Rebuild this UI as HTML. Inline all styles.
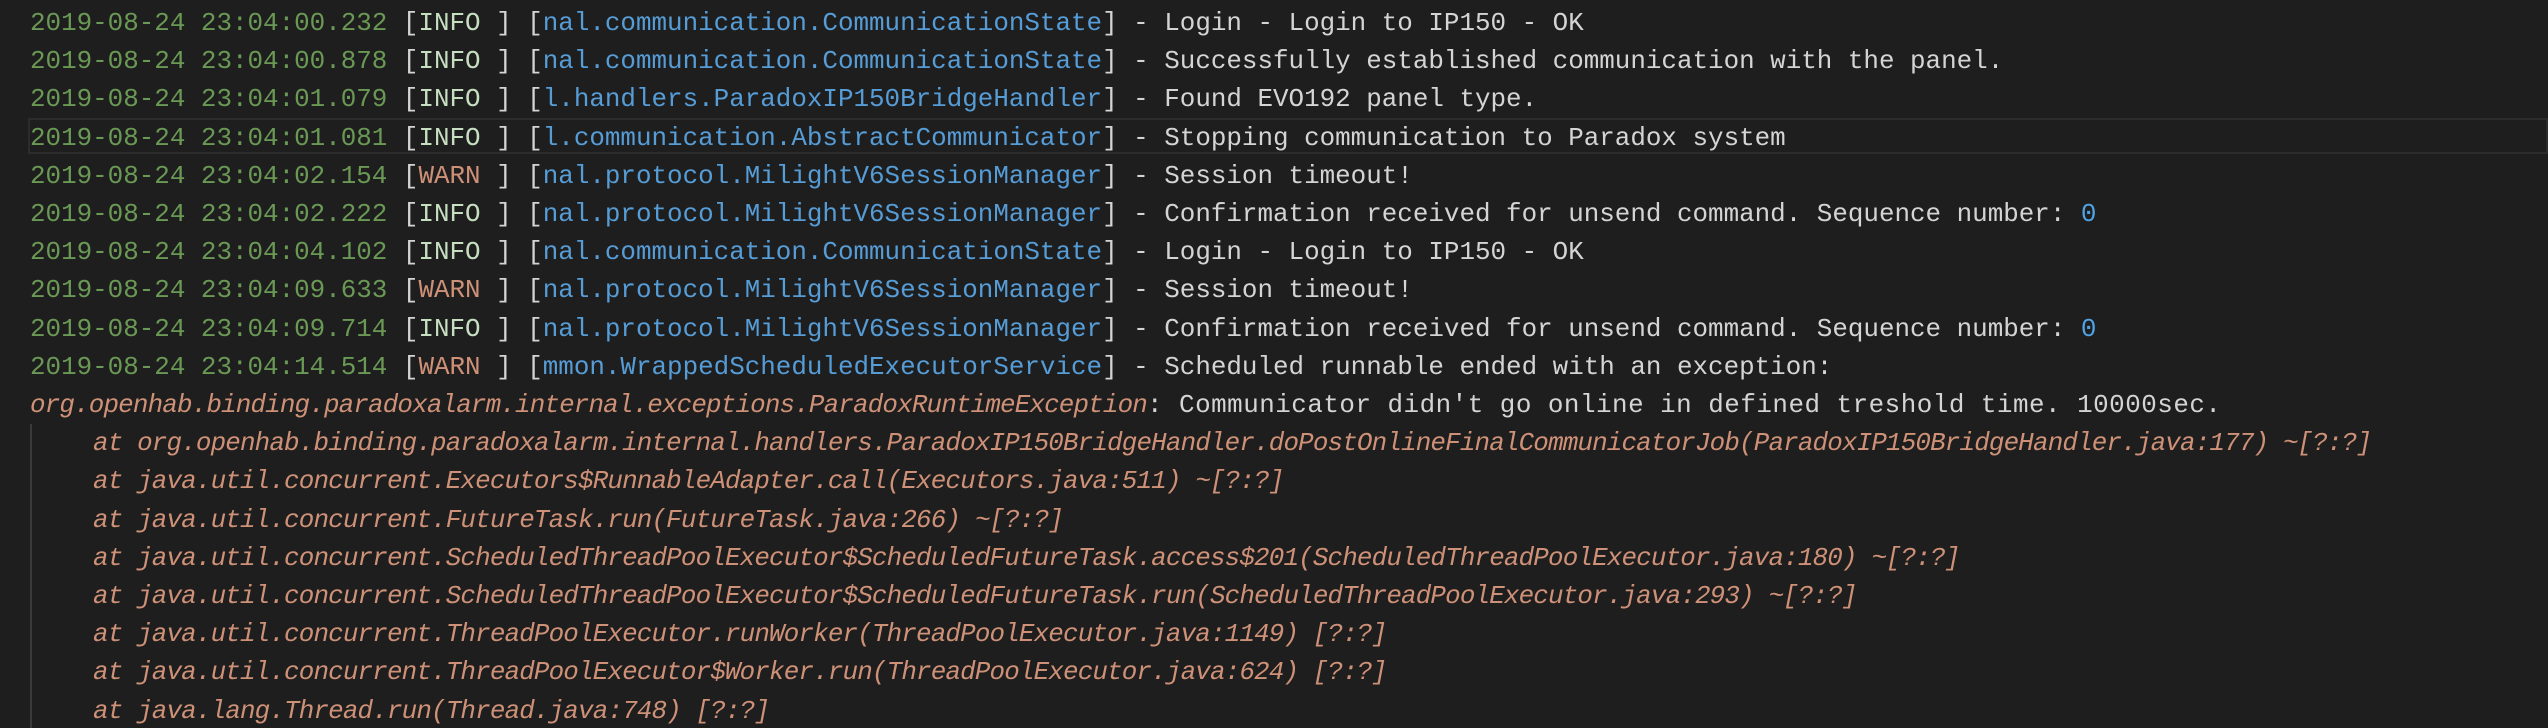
<!DOCTYPE html>
<html><head><meta charset="utf-8"><style>
html,body{margin:0;padding:0;background:#1e1e1e;width:2548px;height:728px;overflow:hidden}
pre{margin:0;padding:4px 0 0 30px;font-family:"Liberation Mono",monospace;font-size:25.9px;line-height:38.2px;color:#d4d4d4;position:relative;white-space:pre}
.t{color:#6a9955}.i{color:#c5dfc0}.w{color:#ce9178}.l{color:#569cd6}.n{color:#4fa3e6}
.e{color:#ce9178;font-style:italic;letter-spacing:-0.84px}
.m{letter-spacing:0.5px}
.ind{display:inline-block;width:63px}
.cur{position:absolute;left:28px;top:118px;width:2520px;height:36px;border:2px solid #2c2c2c;box-sizing:border-box}
.guide{position:absolute;left:30px;top:424px;width:2px;height:304px;background:#3a3a3a}
</style></head><body>
<div class="cur"></div><div class="guide"></div>
<pre><span class="t">2019-08-24 23:04:00.232</span> [<span class="i">INFO</span> ] [<span class="l">nal.communication.CommunicationState</span>] - Login - Login to IP150 - OK
<span class="t">2019-08-24 23:04:00.878</span> [<span class="i">INFO</span> ] [<span class="l">nal.communication.CommunicationState</span>] - Successfully established communication with the panel.
<span class="t">2019-08-24 23:04:01.079</span> [<span class="i">INFO</span> ] [<span class="l">l.handlers.ParadoxIP150BridgeHandler</span>] - Found EVO192 panel type.
<span class="t">2019-08-24 23:04:01.081</span> [<span class="i">INFO</span> ] [<span class="l">l.communication.AbstractCommunicator</span>] - Stopping communication to Paradox system
<span class="t">2019-08-24 23:04:02.154</span> [<span class="w">WARN</span> ] [<span class="l">nal.protocol.MilightV6SessionManager</span>] - Session timeout!
<span class="t">2019-08-24 23:04:02.222</span> [<span class="i">INFO</span> ] [<span class="l">nal.protocol.MilightV6SessionManager</span>] - Confirmation received for unsend command. Sequence number: <span class="n">0</span>
<span class="t">2019-08-24 23:04:04.102</span> [<span class="i">INFO</span> ] [<span class="l">nal.communication.CommunicationState</span>] - Login - Login to IP150 - OK
<span class="t">2019-08-24 23:04:09.633</span> [<span class="w">WARN</span> ] [<span class="l">nal.protocol.MilightV6SessionManager</span>] - Session timeout!
<span class="t">2019-08-24 23:04:09.714</span> [<span class="i">INFO</span> ] [<span class="l">nal.protocol.MilightV6SessionManager</span>] - Confirmation received for unsend command. Sequence number: <span class="n">0</span>
<span class="t">2019-08-24 23:04:14.514</span> [<span class="w">WARN</span> ] [<span class="l">mmon.WrappedScheduledExecutorService</span>] - Scheduled runnable ended with an exception:
<span class="e">org.openhab.binding.paradoxalarm.internal.exceptions.ParadoxRuntimeException</span><span class="m">: Communicator didn't go online in defined treshold time. 10000sec.</span>
<span class="ind"></span><span class="e">at org.openhab.binding.paradoxalarm.internal.handlers.ParadoxIP150BridgeHandler.doPostOnlineFinalCommunicatorJob(ParadoxIP150BridgeHandler.java:177) ~[?:?]</span>
<span class="ind"></span><span class="e">at java.util.concurrent.Executors$RunnableAdapter.call(Executors.java:511) ~[?:?]</span>
<span class="ind"></span><span class="e">at java.util.concurrent.FutureTask.run(FutureTask.java:266) ~[?:?]</span>
<span class="ind"></span><span class="e">at java.util.concurrent.ScheduledThreadPoolExecutor$ScheduledFutureTask.access$201(ScheduledThreadPoolExecutor.java:180) ~[?:?]</span>
<span class="ind"></span><span class="e">at java.util.concurrent.ScheduledThreadPoolExecutor$ScheduledFutureTask.run(ScheduledThreadPoolExecutor.java:293) ~[?:?]</span>
<span class="ind"></span><span class="e">at java.util.concurrent.ThreadPoolExecutor.runWorker(ThreadPoolExecutor.java:1149) [?:?]</span>
<span class="ind"></span><span class="e">at java.util.concurrent.ThreadPoolExecutor$Worker.run(ThreadPoolExecutor.java:624) [?:?]</span>
<span class="ind"></span><span class="e">at java.lang.Thread.run(Thread.java:748) [?:?]</span></pre>
</body></html>
